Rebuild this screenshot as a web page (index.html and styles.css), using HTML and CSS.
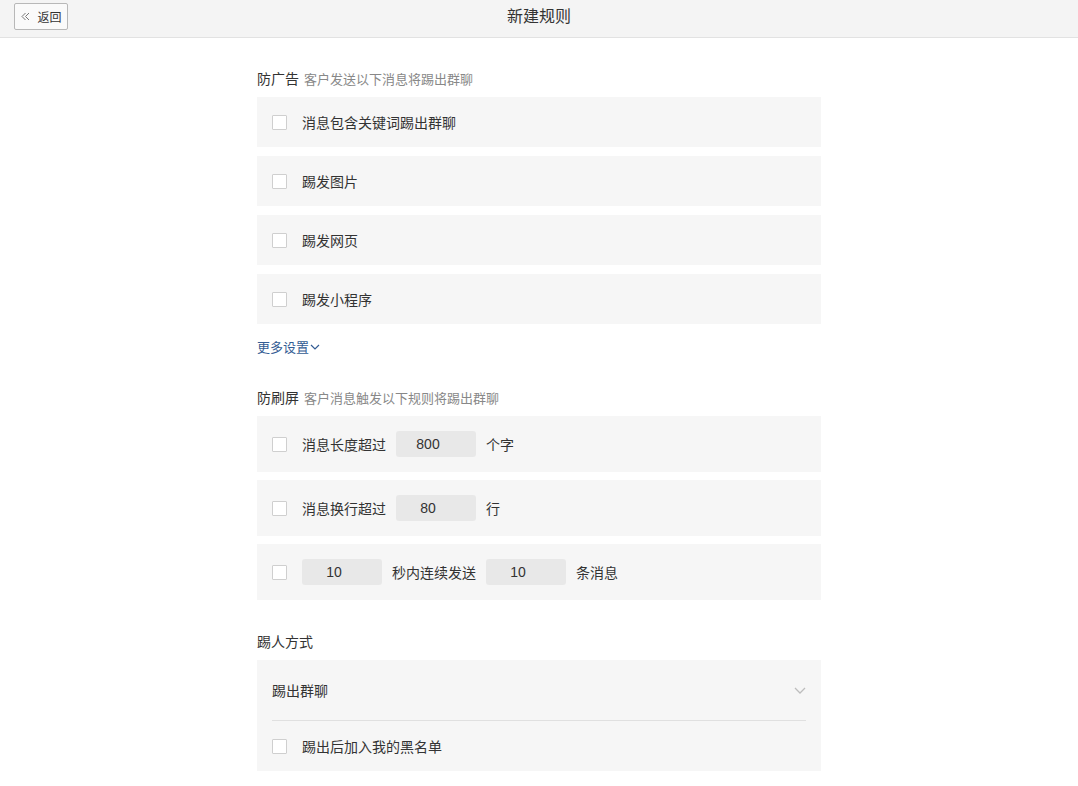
FILE: index.html
```html
<!DOCTYPE html>
<html lang="zh">
<head>
<meta charset="utf-8">
<title>新建规则</title>
<link rel="stylesheet" href="styles.css">
</head>
<body>
<header class="topbar">
  <button class="back"><svg class="back-icon" width="9" height="9" viewBox="0 0 9 9"><path d="M4.5 1L1 4.5 4.5 8M8 1L4.5 4.5 8 8" fill="none" stroke="#777" stroke-width="1"/></svg>返回</button>
  <h1 class="title">新建规则</h1>
</header>
<main class="content">
  <div class="sec-title"><span>防广告</span><span class="sec-sub">客户发送以下消息将踢出群聊</span></div>
  <div class="rows">
    <div class="row"><span class="cb"></span><span>消息包含关键词踢出群聊</span></div>
    <div class="row"><span class="cb"></span><span>踢发图片</span></div>
    <div class="row"><span class="cb"></span><span>踢发网页</span></div>
    <div class="row"><span class="cb"></span><span>踢发小程序</span></div>
  </div>
  <a class="more">更多设置<svg class="more-arrow" width="10" height="7" viewBox="0 0 10 7"><path d="M1 1l4 4 4-4" fill="none" stroke="currentColor" stroke-width="1.2"/></svg></a>

  <div class="sec-title sec2"><span>防刷屏</span><span class="sec-sub">客户消息触发以下规则将踢出群聊</span></div>
  <div class="rows rows-tall">
    <div class="row tall"><span class="cb"></span><span>消息长度超过</span><span class="num">800</span><span>个字</span></div>
    <div class="row tall"><span class="cb"></span><span>消息换行超过</span><span class="num">80</span><span>行</span></div>
    <div class="row tall"><span class="cb"></span><span class="num">10</span><span>秒内连续发送</span><span class="num">10</span><span>条消息</span></div>
  </div>

  <div class="sec-title sec3"><span>踢人方式</span></div>
  <div class="kick-box">
    <div class="select-row"><span>踢出群聊</span><svg class="sel-arrow" width="12" height="7" viewBox="0 0 12 7"><path d="M1 1l5 5 5-5" fill="none" stroke="#bdbdbd" stroke-width="1.3"/></svg></div>
    <div class="kick-check"><span class="cb"></span><span>踢出后加入我的黑名单</span></div>
  </div>
</main>
</body>
</html>
```
FILE: styles.css
```css
* { box-sizing: border-box; }
html, body { margin: 0; padding: 0; background: #fff; }
body {
  font-family: "Noto Sans CJK SC", "Liberation Sans", sans-serif;
  color: #333;
  font-size: 14px;
}
.topbar {
  height: 38px;
  background: #f4f4f4;
  border-bottom: 1px solid #e2e2e2;
  position: relative;
  display: flex;
  align-items: center;
  justify-content: center;
}
.back {
  position: absolute;
  left: 14px;
  top: 3px;
  width: 54px;
  height: 27px;
  border: 1px solid #b8b8b8;
  border-radius: 2px;
  background: #fafafa;
  font-family: inherit;
  font-size: 12px;
  color: #333;
  padding: 0 0 0 1px;
  display: flex;
  align-items: center;
  justify-content: center;
  gap: 7px;
}
.back-icon { flex: none; }
.title {
  margin: 0;
  font-size: 16px;
  font-weight: normal;
  color: #333;
  line-height: 20px;
  margin-top: -8px;
}
.content {
  width: 564px;
  margin: 0 auto;
  padding-top: 30px;
  padding-bottom: 20px;
}
.sec-title {
  height: 20px;
  display: flex;
  align-items: baseline;
  gap: 5px;
  font-size: 14px;
  line-height: 20px;
  color: #333;
  margin-bottom: 9px;
}
.sec-sub { color: #888; font-size: 13px; }
.sec2 { margin-top: 30px; }
.sec3 { margin-top: 31px; }
.rows { display: flex; flex-direction: column; gap: 9px; }
.rows-tall { gap: 8px; }
.row {
  height: 50px;
  background: #f6f6f6;
  display: flex;
  align-items: center;
  padding-left: 15px;
  font-size: 14px;
  gap: 10px;
}
.row .cb { margin-right: 5px; }
.row.tall { height: 56px; }
.cb {
  width: 15px;
  height: 15px;
  border: 1px solid #cfcfcf;
  background: #fff;
  border-radius: 1px;
  flex: none;
}
.num {
  width: 80px;
  height: 26px;
  background: #e8e8e8;
  border-radius: 3px;
  display: flex;
  align-items: center;
  justify-content: center;
  padding-right: 16px;
  font-family: "Liberation Sans", sans-serif;
  font-size: 14px;
  color: #333;
}
.more {
  display: flex;
  align-items: center;
  height: 20px;
  margin-top: 13px;
  line-height: 20px;
  font-size: 13px;
  color: #335c94;
}
.more-arrow { margin-left: 1px; }
.kick-box {
  background: #f6f6f6;
  padding: 0 15px;
  font-size: 14px;
}
.select-row {
  height: 61px;
  display: flex;
  align-items: center;
  justify-content: space-between;
  border-bottom: 1px solid #e0e0e0;
}
.kick-check {
  height: 50px;
  display: flex;
  align-items: center;
  gap: 15px;
}
```
